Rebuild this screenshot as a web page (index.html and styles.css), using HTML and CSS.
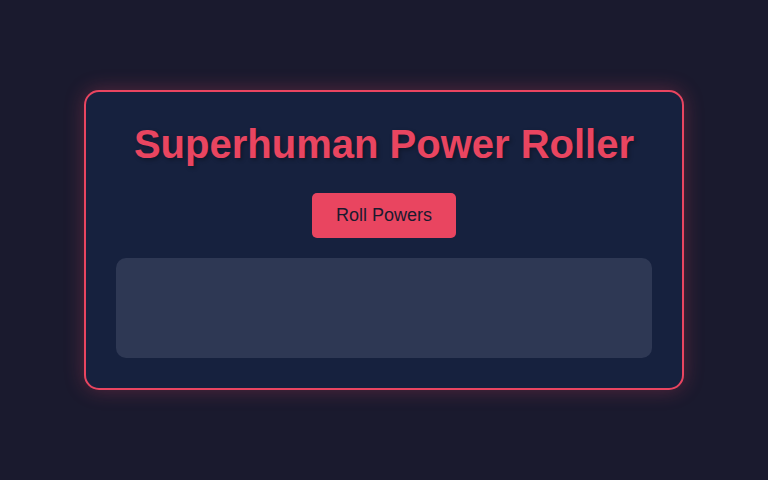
FILE: index.html
```html
<!DOCTYPE html>
<html lang="en">
<head>
  <meta charset="UTF-8" />
  <meta name="viewport" content="width=device-width, initial-scale=1.0" />
  <title>Superhuman Power Roller</title>
  <link rel="stylesheet" href="styles.css">
</head>
<body>
  <div class="container">
    <h1>Superhuman Power Roller</h1>
    <button id="rollBtn">Roll Powers</button>
    <div id="results" class="results"></div>
  </div>
</body>
</html>
```

FILE: styles.css
```css
body {
  font-family: "Liberation Sans", Arial, sans-serif;
  background-color: #1a1a2e;
  color: #ffffff;
  margin: 0;
  min-height: 100vh;
  display: flex;
  align-items: center;
  justify-content: center;
}
.container {
  width: 536px;
  padding: 30px;
  background: #16213e;
  border: 2px solid #e94560;
  border-radius: 15px;
  box-shadow: 0 0 20px rgba(233, 69, 96, 0.3);
  text-align: center;
}
h1 {
  margin: 0 0 27px;
  font-size: 40px;
  line-height: 44px;
  color: #e94560;
  text-shadow: 2px 2px 4px rgba(0, 0, 0, 0.3);
}
button {
  padding: 12px 24px;
  font-family: inherit;
  font-size: 18px;
  background: #e94560;
  color: #1a1a2e;
  border: none;
  border-radius: 5px;
  cursor: pointer;
  margin-bottom: 20px;
}
.results {
  height: 100px;
  background: #2e3854;
  border-radius: 10px;
}
```
